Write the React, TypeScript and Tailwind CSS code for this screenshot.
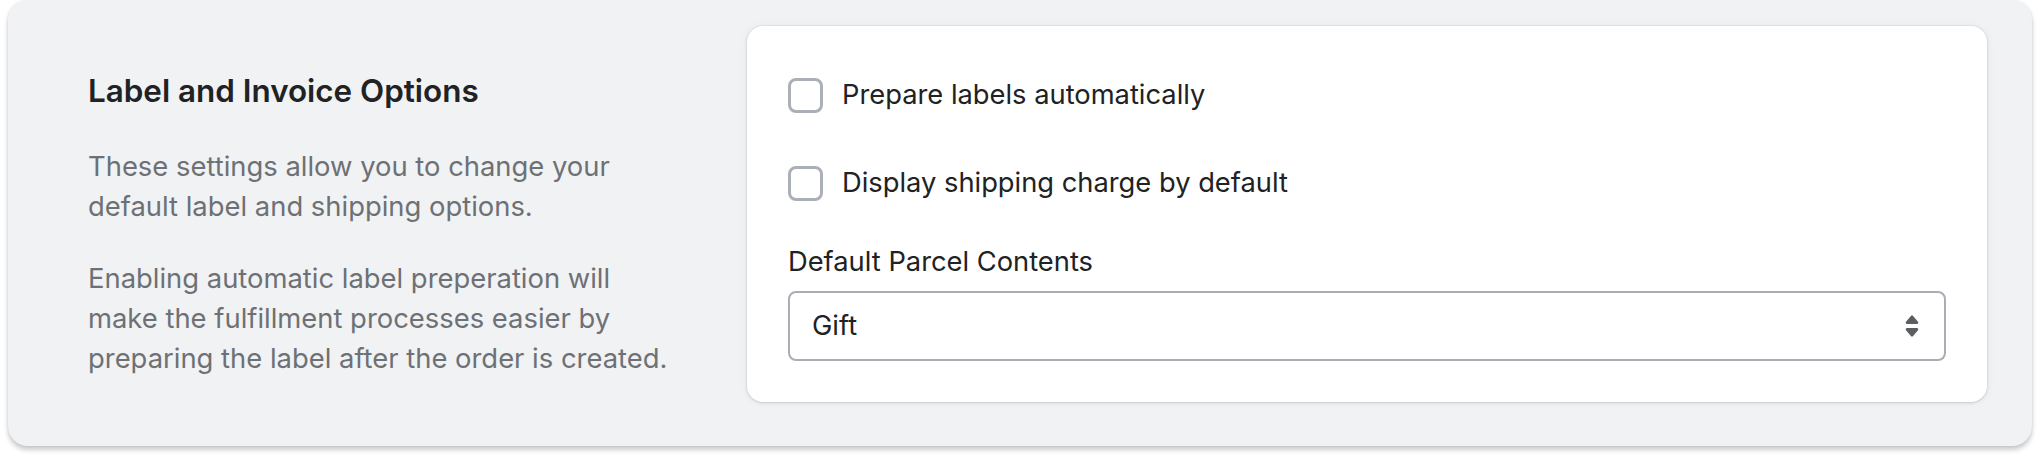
import React from "react";

function SelectIcon() {
  return (
    <svg width="42" height="42" viewBox="0 0 20 20" className="flex-none" aria-hidden="true">
      <path
        fill="#5c5f62"
        d="M7.676 9h4.648c.563 0 .879-.603.53-1.014l-2.323-2.746a.708.708 0 0 0-1.062 0l-2.324 2.746c-.347.411-.032 1.014.531 1.014Zm4.648 2h-4.648c-.563 0-.878.603-.53 1.014l2.323 2.746c.27.32.792.32 1.062 0l2.323-2.746c.349-.411.033-1.014-.53-1.014Z"
      />
    </svg>
  );
}

function CheckRow({ label, className }: { label: string; className?: string }) {
  return (
    <label className={"flex h-[40px] items-center gap-[19px] " + (className ?? "")}>
      <span className="block h-[35px] w-[35px] flex-none rounded-[8px] border-[3px] border-[#abb0b8] bg-white" />
      <span className="text-[27.3px] leading-[40px] text-[#202223]">{label}</span>
    </label>
  );
}

export default function App() {
  return (
    <div className="h-[462px] w-[2040px] bg-white px-2 font-['Inter',sans-serif]">
      <div className="flex h-[446px] rounded-[20px] bg-[#f1f2f4] pb-[44px] pl-[80px] pr-[45px] pt-[26px] shadow-[0_4px_5px_rgba(0,0,0,0.2),0_0_3px_rgba(0,0,0,0.08)]">
        <div className="w-[659px] flex-none pt-[47px]">
          <h2 className="text-[31.4px] font-semibold leading-[36px] text-[#202223]">
            Label and Invoice Options
          </h2>
          <p className="mt-[37px] text-[27.4px] leading-[40px] text-[#6d7175]">
            These settings allow you to change your
            <br />
            default label and shipping options.
          </p>
          <p className="mt-[32px] text-[27.4px] leading-[40px] text-[#6d7175]">
            Enabling automatic label preperation will
            <br />
            make the fulfillment processes easier by
            <br />
            preparing the label after the order is created.
          </p>
        </div>
        <div className="flex-1 rounded-[16px] bg-white px-[41px] pb-[41px] pt-[49px] shadow-[0_0_0_1px_rgba(63,63,68,0.04),0_1px_3px_rgba(63,63,68,0.15),0_0_10px_rgba(0,0,0,0.05)]">
          <CheckRow label="Prepare labels automatically" />
          <CheckRow label="Display shipping charge by default" className="mt-[48px]" />
          <div className="mt-[39px] text-[27.3px] leading-[40px] text-[#202223]">Default Parcel Contents</div>
          <div className="mt-[9px] flex h-[70px] items-center justify-between rounded-[8px] border-2 border-[#a9adb4] bg-white pl-[22px] pr-[11px]">
            <span className="text-[27.3px] leading-[40px] text-[#202223]">Gift</span>
            <SelectIcon />
          </div>
        </div>
      </div>
    </div>
  );
}
